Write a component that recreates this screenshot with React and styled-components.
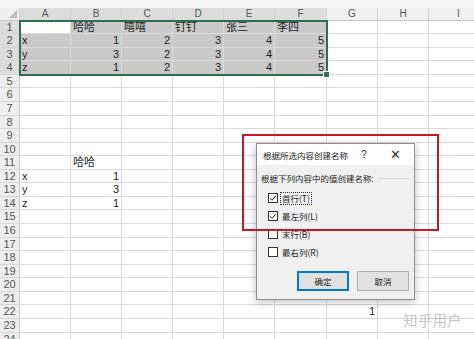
import React from 'react';
import styled, { createGlobalStyle } from 'styled-components';

const GlobalStyle = createGlobalStyle`
  html, body {
    margin: 0;
    padding: 0;
    background: #ffffff;
  }
  * {
    box-sizing: border-box;
  }
`;

const COLS = ['A', 'B', 'C', 'D', 'E', 'F', 'G', 'H', 'I'];
const ROW_COUNT = 24;

// sheet content, keyed by row then column
const sheetData = {
  1: { B: '哈哈', C: '嘻嘻', D: '钉钉', E: '张三', F: '李四' },
  2: { A: 'x', B: 1, C: 2, D: 3, E: 4, F: 5 },
  3: { A: 'y', B: 3, C: 2, D: 3, E: 4, F: 5 },
  4: { A: 'z', B: 1, C: 2, D: 3, E: 4, F: 5 },
  11: { B: '哈哈' },
  12: { A: 'x', B: 1 },
  13: { A: 'y', B: 3 },
  14: { A: 'z', B: 1 },
  22: { G: 1 },
};

const isSelected = (row, col) => row >= 1 && row <= 4 && COLS.indexOf(col) <= 5;

const options = [
  { label: '首行(T)', checked: true, focused: true },
  { label: '最左列(L)', checked: true },
  { label: '末行(B)', checked: false },
  { label: '最右列(R)', checked: false },
];

const Page = styled.div`
  position: relative;
  width: 474px;
  height: 339px;
  overflow: hidden;
  background: #ffffff;
  font-family: 'Liberation Sans', 'Noto Sans CJK SC', sans-serif;
`;

const TopStrip = styled.div`
  height: 8px;
  background: #f6f6f6;
`;

const Sheet = styled.div`
  display: grid;
  grid-template-columns: 20px repeat(5, 51px) 52px 51px 51px 60px;
  grid-template-rows: 12.6px repeat(${ROW_COUNT}, 13.57px);
`;

const Corner = styled.div`
  background: #eeeeee;
  border-right: 1px solid #d0d0d0;
  border-bottom: 1px solid #c8c8c8;
  display: flex;
  align-items: flex-end;
  justify-content: flex-end;
  padding: 0 2px 2px 0;
`;

const ColHeader = styled.div`
  background: ${({ $selected }) => ($selected ? '#dcdcdc' : '#f0f0f0')};
  border-right: 1px solid #d2d2d2;
  border-bottom: 1px solid #c6c6c6;
  color: #555555;
  font-size: 10px;
  line-height: 12px;
  text-align: center;
`;

const RowHeader = styled.div`
  background: ${({ $selected }) => ($selected ? '#dcdcdc' : '#eeeeee')};
  border-right: 1px solid #c6c6c6;
  border-bottom: 1px solid #d6d6d6;
  color: #555555;
  font-size: 11px;
  line-height: 13px;
  text-align: center;
`;

const Cell = styled.div`
  background: ${({ $selected, $active }) =>
    $active ? '#ffffff' : $selected ? '#c9c9c9' : '#ffffff'};
  border-right: 1px solid #dadada;
  border-bottom: 1px solid #dadada;
  color: #1e1e1e;
  font-size: 11px;
  line-height: 13px;
  padding: 0 2px;
  text-align: ${({ $align }) => $align};
  white-space: nowrap;
  overflow: hidden;
`;

const Selection = styled.div`
  position: absolute;
  left: 19px;
  top: 20px;
  width: 309px;
  height: 56px;
  border: 2px solid #2f6f50;
  pointer-events: none;

  &::after {
    content: '';
    position: absolute;
    right: -4px;
    bottom: -4px;
    width: 5px;
    height: 5px;
    background: #2f6f50;
    border: 1px solid #ffffff;
  }
`;

const Dialog = styled.div`
  position: absolute;
  left: 256px;
  top: 143px;
  width: 159px;
  height: 157px;
  background: #f0f0f0;
  border: 1px solid #8f8f8f;
  box-shadow: 0 2px 8px rgba(0, 0, 0, 0.25);
  font-family: 'Noto Sans CJK SC', 'Liberation Sans', sans-serif;
  font-size: 8.5px;
  color: #1a1a1a;
  display: flex;
  flex-direction: column;
`;

const TitleBar = styled.div`
  height: 21px;
  background: #ffffff;
  display: flex;
  align-items: center;
  padding-left: 6px;
`;

const Title = styled.div`
  flex: 1;
  font-size: 8.5px;
`;

const TitleButton = styled.div`
  width: ${({ $w }) => $w}px;
  text-align: center;
  font-size: ${({ $size }) => $size}px;
  color: #333333;
  font-family: 'Liberation Sans', sans-serif;
`;

const Body = styled.div`
  flex: 1;
  padding: 7px 5px 8px 4px;
  display: flex;
  flex-direction: column;
`;

const GroupLabel = styled.div`
  display: flex;
  align-items: center;
  gap: 3px;
  height: 12px;
  white-space: nowrap;

  &::after {
    content: '';
    flex: 1;
    height: 1px;
    background: #d5d5d5;
  }
`;

const CheckList = styled.div`
  margin-top: 5px;
  padding-left: 7px;
  display: flex;
  flex-direction: column;
`;

const CheckRow = styled.div`
  height: 18px;
  display: flex;
  align-items: center;
  gap: 2px;
`;

const Box = styled.div`
  width: 10px;
  height: 10px;
  background: #ffffff;
  border: 1px solid #333333;
  display: flex;
  align-items: center;
  justify-content: center;
`;

const CheckLabel = styled.span`
  padding: 0 1px;
  line-height: 11px;
  border: 1px dotted ${({ $focused }) => ($focused ? '#333333' : 'transparent')};
`;

const ButtonRow = styled.div`
  margin-top: auto;
  display: flex;
  justify-content: flex-end;
  gap: 8px;
`;

const Button = styled.div`
  width: 52px;
  height: 20px;
  display: flex;
  align-items: center;
  justify-content: center;
  background: #e1e1e1;
  border: ${({ $primary }) => ($primary ? '2px solid #0078d7' : '1px solid #adadad')};
`;

const RedFrame = styled.div`
  position: absolute;
  left: 242px;
  top: 134px;
  width: 197px;
  height: 97px;
  border: 2px solid #c41a22;
  pointer-events: none;
`;

const Watermark = styled.div`
  position: absolute;
  left: 403px;
  top: 311px;
  font-family: 'Noto Sans CJK SC', sans-serif;
  font-size: 14.5px;
  line-height: 18px;
  color: rgba(170, 170, 170, 0.7);
  letter-spacing: 0.2px;
`;

const CheckMark = () => (
  <svg width="8" height="8" viewBox="0 0 8 8">
    <path d="M1 4.2 L3.1 6.3 L7 1.6" fill="none" stroke="#222" strokeWidth="1" />
  </svg>
);

const CornerTriangle = () => (
  <svg width="8" height="8" viewBox="0 0 8 8">
    <polygon points="8,0 8,8 0,8" fill="#bdbdbd" />
  </svg>
);

const App = () => {
  const rows = Array.from({ length: ROW_COUNT }, (_, i) => i + 1);

  return (
    <Page>
      <GlobalStyle />
      <TopStrip />
      <Sheet>
        <Corner>
          <CornerTriangle />
        </Corner>
        {COLS.map((col, i) => (
          <ColHeader key={col} $selected={i <= 5}>
            {col}
          </ColHeader>
        ))}
        {rows.map((row) => (
          <React.Fragment key={row}>
            <RowHeader $selected={row <= 4}>{row}</RowHeader>
            {COLS.map((col) => {
              const value = sheetData[row]?.[col];
              const numeric = typeof value === 'number';
              return (
                <Cell
                  key={col}
                  $selected={isSelected(row, col)}
                  $active={row === 1 && col === 'A'}
                  $align={numeric ? 'right' : 'left'}
                >
                  {value}
                </Cell>
              );
            })}
          </React.Fragment>
        ))}
      </Sheet>
      <Selection />

      <Dialog>
        <TitleBar>
          <Title>根据所选内容创建名称</Title>
          <TitleButton $w={24} $size={10}>?</TitleButton>
          <TitleButton $w={38} $size={13}>✕</TitleButton>
        </TitleBar>
        <Body>
          <GroupLabel>根据下列内容中的值创建名称:</GroupLabel>
          <CheckList>
            {options.map((opt) => (
              <CheckRow key={opt.label}>
                <Box>{opt.checked && <CheckMark />}</Box>
                <CheckLabel $focused={opt.focused}>{opt.label}</CheckLabel>
              </CheckRow>
            ))}
          </CheckList>
          <ButtonRow>
            <Button $primary>确定</Button>
            <Button>取消</Button>
          </ButtonRow>
        </Body>
      </Dialog>
      <RedFrame />
      <Watermark>知乎用户</Watermark>
    </Page>
  );
};

export default App;
